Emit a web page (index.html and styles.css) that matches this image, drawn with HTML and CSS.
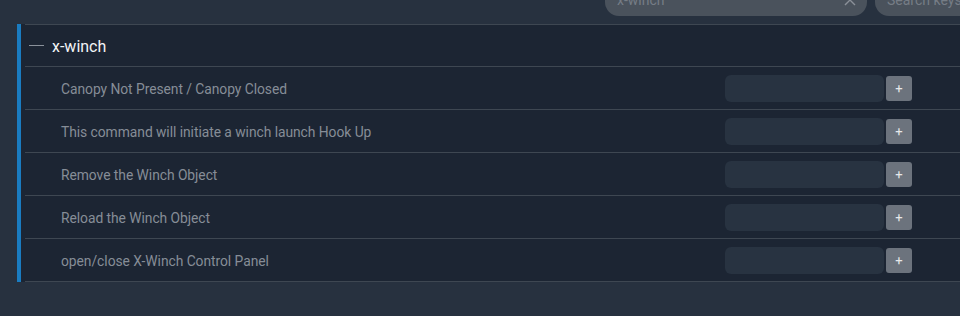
FILE: index.html
```html
<!DOCTYPE html>
<html>
<head>
<meta charset="utf-8">
<link rel="stylesheet" href="styles.css">
</head>
<body>
<div class="topbar">
  <div class="search filter">
    <span class="search-text">x-winch</span>
    <svg class="clear" width="14" height="14" viewBox="0 0 14 14"><path d="M2 2L12 12M12 2L2 12" stroke="#8a9098" stroke-width="1.4" fill="none"/></svg>
  </div>
  <div class="search keys"><span class="search-text">Search keys</span></div>
</div>
<div class="panel">
  <div class="list">
    <div class="group-head"><span class="dash"></span><span class="group-title">x-winch</span></div>
    <div class="row"><span class="label">Canopy Not Present / Canopy Closed</span><div class="bind"><div class="key"></div><button class="add">+</button></div></div>
    <div class="row"><span class="label">This command will initiate a winch launch Hook Up</span><div class="bind"><div class="key"></div><button class="add">+</button></div></div>
    <div class="row"><span class="label">Remove the Winch Object</span><div class="bind"><div class="key"></div><button class="add">+</button></div></div>
    <div class="row"><span class="label">Reload the Winch Object</span><div class="bind"><div class="key"></div><button class="add">+</button></div></div>
    <div class="row"><span class="label">open/close X-Winch Control Panel</span><div class="bind"><div class="key"></div><button class="add">+</button></div></div>
  </div>
</div>
</body>
</html>
```
FILE: styles.css
```css
html, body {
  margin: 0;
  padding: 0;
  background: #27313f;
  font-family: Roboto, "Liberation Sans", sans-serif;
  overflow: hidden;
}
.topbar {
  height: 24px;
  display: flex;
  justify-content: flex-end;
  align-items: flex-end;
  gap: 8px;
  overflow: hidden;
}
.search {
  flex: none;
  height: 32px;
  margin-bottom: 8px;
  border-radius: 14px;
  background: #4a525c;
  display: flex;
  align-items: center;
  padding: 0 12px;
  box-sizing: border-box;
  position: relative;
}
.search-text {
  color: #767d86;
  font-size: 14px;
}
.filter {
  width: 262px;
}
.keys {
  width: 100px;
  margin-right: -15px;
}
.clear {
  position: absolute;
  right: 10px;
  top: 9px;
}
.panel {
  margin-left: 17px;
  border-left: 4px solid #1a7cc1;
  background: #1c2533;
  padding-left: 4px;
}
.list {
  border-bottom: 1px solid #3e4752;
}
.group-head {
  height: 41px;
  border-top: 1px solid #3e4752;
  display: flex;
  align-items: center;
  padding-left: 4px;
}
.dash {
  width: 15px;
  height: 1px;
  background: #8a919b;
  margin-right: 8px;
}
.group-title {
  color: #f2f4f6;
  font-size: 16px;
  margin-top: 2px;
}
.row {
  height: 42px;
  border-top: 1px solid #3e4752;
  display: flex;
  align-items: center;
  justify-content: space-between;
  padding-left: 36px;
  padding-right: 48px;
}
.label {
  color: #868d97;
  font-size: 13.85px;
  letter-spacing: -0.05px;
  margin-top: 2px;
}
.bind {
  display: flex;
  align-items: center;
  gap: 2px;
}
.key {
  width: 159px;
  height: 27px;
  border-radius: 6px;
  background: #283341;
}
.add {
  width: 26px;
  height: 25px;
  border: none;
  border-radius: 3px;
  background: #6c737d;
  color: #e6e8ea;
  font-family: Roboto, "Liberation Sans", sans-serif;
  font-size: 13px;
  padding: 0;
  line-height: 25px;
}
```
